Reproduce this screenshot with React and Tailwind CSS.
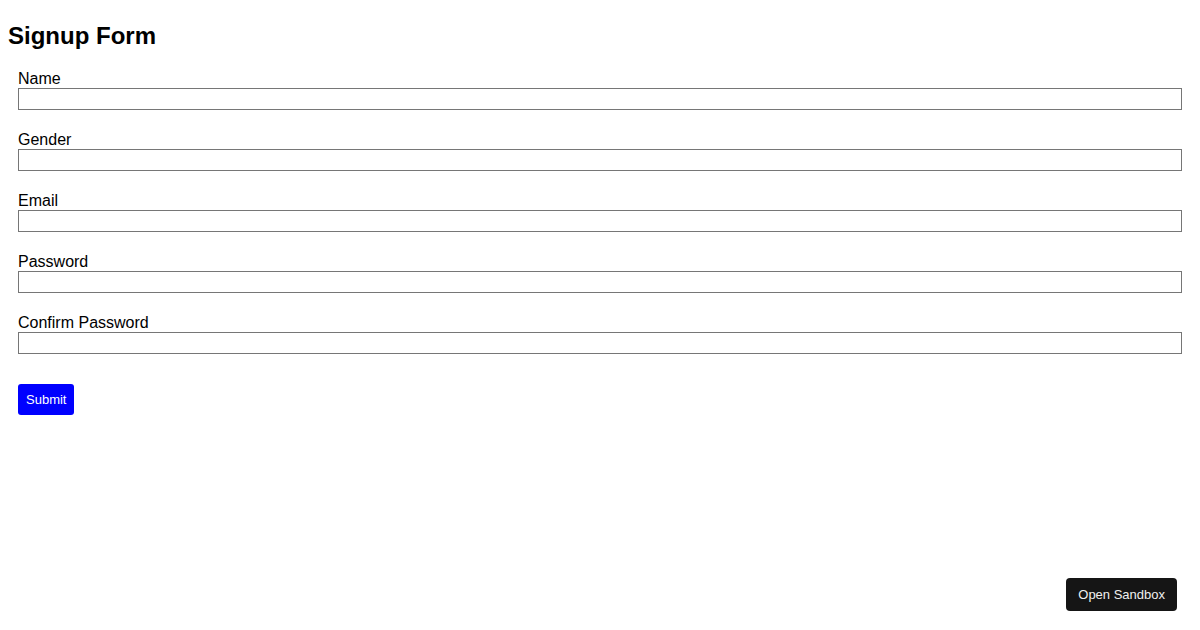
const FIELDS = [
  { id: "name", label: "Name", type: "text" },
  { id: "gender", label: "Gender", type: "text" },
  { id: "email", label: "Email", type: "email" },
  { id: "password", label: "Password", type: "password" },
  { id: "confirm", label: "Confirm Password", type: "password" },
];

export default function App() {
  return (
    <div className="min-h-[630px] bg-white px-2 text-black font-['Liberation_Sans',Arial,sans-serif]">
      <h2 className="pt-[22px] text-2xl leading-[28px] font-bold">Signup Form</h2>
      <form className="mt-[19px] px-[10px]" onSubmit={(e) => e.preventDefault()}>
        {FIELDS.map((f) => (
          <div key={f.id} className="mb-5">
            <label htmlFor={f.id} className="block text-base leading-[19px]">{f.label}</label>
            <input id={f.id} type={f.type} className="block w-full h-[22px] border border-[#767676] px-0.5 text-[13px] outline-none" />
          </div>
        ))}
        <button type="submit" className="mt-[10px] h-[31px] px-[8px] rounded-[3px] bg-[#0000ff] text-[13px] text-white">Submit</button>
      </form>
      <button className="fixed right-[23px] bottom-[19px] h-[33px] px-[12px] rounded-[4px] bg-[#151515] text-[13px] text-[#f0f0f0]">Open Sandbox</button>
    </div>
  );
}
